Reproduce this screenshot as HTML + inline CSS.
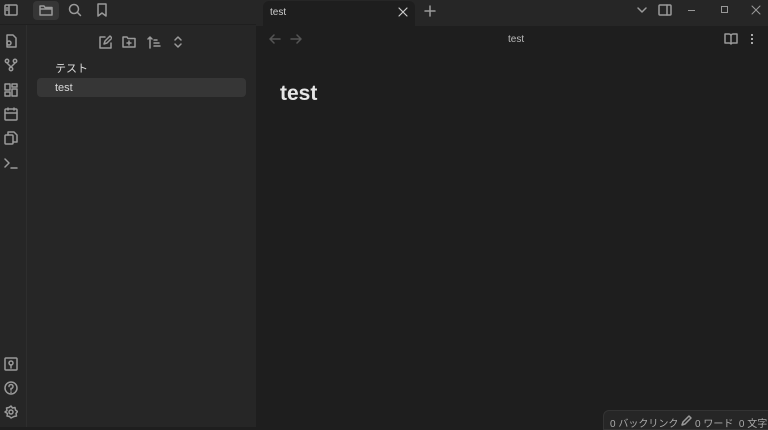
<!DOCTYPE html><html><head><meta charset="utf-8"><style>
*{margin:0;padding:0;box-sizing:border-box}
body{width:768px;height:427px;background:#1e1e1e;font-family:"Liberation Sans","Noto Sans CJK JP",sans-serif;position:relative;overflow:hidden;color:#dadada}
.a{position:absolute}
svg{position:absolute;fill:none;stroke:#9a9a9a;stroke-width:1.5;stroke-linecap:round;stroke-linejoin:round}
</style></head><body>
<div class="a" style="left:0;top:0;width:256px;height:427px;background:#262626"></div>
<div class="a" style="left:26px;top:25px;width:230px;height:402px;background:#262626;border-left:1px solid #2e2e2e"></div>
<div class="a" style="left:0;top:24px;width:256px;height:1px;background:#1f1f1f"></div>
<div class="a" style="left:256px;top:0;width:512px;height:26px;background:#262626"></div>
<div class="a" style="left:263px;top:1px;width:152px;height:25px;background:#1e1e1e;border-radius:6px 6px 0 0"></div>
<div class="a" style="left:33px;top:1px;width:26px;height:19px;background:#363636;border-radius:4px"></div>
<div class="a" style="left:37px;top:78px;width:209px;height:19px;background:#363636;border-radius:4px"></div>
<div class="a" style="left:55px;top:60px;font-size:11px;color:#dadada">テスト</div>
<div class="a" style="left:55px;top:82px;font-size:11px;color:#dadada">test</div>
<div class="a" style="left:270px;top:7px;font-size:10px;color:#cfcfcf">test</div>
<div class="a" style="left:508px;top:34px;font-size:10px;color:#bbb">test</div>
<div class="a" style="left:280px;top:82px;font-size:21px;font-weight:bold;color:#e6e6e6">test</div>
<div class="a" style="left:603px;top:410px;width:170px;height:20px;background:#262626;border:1px solid #333;border-radius:6px 0 0 0"></div>
<div class="a" style="left:610px;top:415px;font-size:10px;color:#aaa;white-space:nowrap">0 バックリンク &nbsp;&nbsp;&nbsp;&nbsp;&nbsp;0 ワード &nbsp;0 文字</div>
<svg width="14" height="14" style="left:679px;top:414px" viewBox="0 0 14 14"><path d="M3 11l1-3 6-6 2 2-6 6z"/></svg>
<svg width="14" height="12" style="left:4px;top:4px" viewBox="0 0 14 12"><rect x="1" y="1" width="12" height="10" rx="1"/><path d="M5 1v10M2.5 4h1M2.5 6h1"/></svg>
<svg width="14" height="12" style="left:39px;top:4px" viewBox="0 0 14 12"><path d="M1 2h4l1 1.5h7V11H1z M1 5h12"/></svg>
<svg width="14" height="14" style="left:68px;top:3px" viewBox="0 0 14 14"><circle cx="6" cy="6" r="4.5"/><path d="M9.5 9.5l3 3"/></svg>
<svg width="12" height="14" style="left:96px;top:3px" viewBox="0 0 12 14"><path d="M2 1h8v12l-4-3-4 3z"/></svg>
<svg width="14" height="14" style="left:4px;top:34px" viewBox="0 0 14 14"><path d="M3 1h6l3 3v9H3z"/><circle cx="5" cy="9" r="2"/></svg>
<svg width="14" height="14" style="left:4px;top:58px" viewBox="0 0 14 14"><circle cx="3" cy="3" r="1.7"/><circle cx="11" cy="3" r="1.7"/><circle cx="7" cy="11" r="1.7"/><path d="M3 5l4 4M11 5l-4 4"/></svg>
<svg width="14" height="14" style="left:4px;top:83px" viewBox="0 0 14 14"><rect x="1" y="1" width="5" height="6"/><rect x="8" y="1" width="5" height="3"/><rect x="8" y="6" width="5" height="7"/><rect x="1" y="9" width="5" height="4"/></svg>
<svg width="14" height="14" style="left:4px;top:107px" viewBox="0 0 14 14"><rect x="1" y="2" width="12" height="11" rx="1"/><path d="M1 6h12M4 1v2M10 1v2"/></svg>
<svg width="14" height="14" style="left:4px;top:131px" viewBox="0 0 14 14"><rect x="1" y="4" width="8" height="9" rx="1"/><path d="M4 4V1h6l3 3v7h-4"/></svg>
<svg width="14" height="14" style="left:4px;top:156px" viewBox="0 0 14 14"><path d="M1 3l4 4-4 4M7 12h6"/></svg>
<svg width="14" height="14" style="left:4px;top:357px" viewBox="0 0 14 14"><rect x="1" y="1" width="12" height="12" rx="1"/><circle cx="7" cy="6" r="2"/><path d="M7 8v3"/></svg>
<svg width="14" height="14" style="left:4px;top:381px" viewBox="0 0 14 14"><circle cx="7" cy="7" r="6"/><path d="M5 5.5a2 2 0 1 1 2 2v1.5M7 11v.2"/></svg>
<svg width="14" height="14" style="left:4px;top:405px" viewBox="0 0 14 14"><circle cx="7" cy="7" r="2"/><path d="M7 1l1.5 2 2.5-.5.5 2.5 2 1.5-1.5 2 .5 2.5-2.5.5L7 13l-1.5-1.5-2.5-.5.5-2.5L1 7l2-1.5-.5-2.5 2.5-.5z"/></svg>
<svg width="14" height="14" style="left:98px;top:35px" viewBox="0 0 14 14"><path d="M7 2H2v11h11V8M6 9l1-3 5-5 2 2-5 5z"/></svg>
<svg width="14" height="14" style="left:122px;top:35px" viewBox="0 0 14 14"><path d="M1 2h4l1 1.5h7V12H1zM7 6v4M5 8h4"/></svg>
<svg width="14" height="14" style="left:147px;top:35px" viewBox="0 0 14 14"><path d="M3 13V2M1 4l2-2 2 2M7 5h3M7 8h5M7 11h6"/></svg>
<svg width="14" height="14" style="left:171px;top:35px" viewBox="0 0 14 14"><path d="M4 5l3-3 3 3M4 9l3 3 3-3"/></svg>
<svg width="10" height="10" style="left:398px;top:7px" viewBox="0 0 10 10"><path d="M1 1l8 8M9 1l-8 8" stroke="#ccc" stroke-width="1.2"/></svg>
<svg width="12" height="12" style="left:424px;top:5px" viewBox="0 0 12 12"><path d="M6 1v10M1 6h10"/></svg>
<svg width="12" height="10" style="left:636px;top:5px" viewBox="0 0 12 10"><path d="M2 3l4 4 4-4"/></svg>
<svg width="14" height="12" style="left:658px;top:4px" viewBox="0 0 14 12"><rect x="1" y="1" width="12" height="10" rx="1"/><path d="M9 1v10"/></svg>
<div class="a" style="left:688px;top:10px;width:7px;height:1px;background:#999"></div>
<div class="a" style="left:721px;top:6px;width:7px;height:7px;border:1px solid #999"></div>
<svg width="10" height="10" style="left:751px;top:5px" viewBox="0 0 10 10"><path d="M1 1l8 8M9 1l-8 8" stroke-width="1"/></svg>
<svg width="12" height="10" style="left:269px;top:34px" viewBox="0 0 12 10"><path d="M11 5H1M5 1L1 5l4 4" stroke="#555"/></svg>
<svg width="12" height="10" style="left:290px;top:34px" viewBox="0 0 12 10"><path d="M1 5h10M7 1l4 4-4 4" stroke="#555"/></svg>
<svg width="14" height="12" style="left:724px;top:33px" viewBox="0 0 14 12"><path d="M1 1h4a2 2 0 0 1 2 2v8a2 2 0 0 0-2-1H1zM13 1H9a2 2 0 0 0-2 2v8a2 2 0 0 1 2-1h4z"/></svg>
<div class="a" style="left:751px;top:34px;width:2px;height:2px;background:#aaa;box-shadow:0 4px 0 #aaa,0 8px 0 #aaa"></div>
</body></html>
